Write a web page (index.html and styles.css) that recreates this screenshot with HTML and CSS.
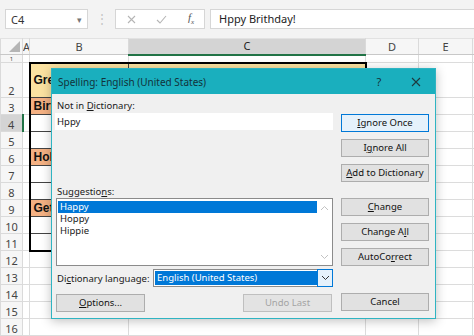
FILE: index.html
```html
<!DOCTYPE html>
<html lang="en">
<head>
  <meta charset="UTF-8">
  <title>Spelling</title>
  <link rel="stylesheet" href="styles.css">
</head>
<body>
  <div class="app">
    <div class="formula-bar">
      <div class="name-box"><span>C4</span><span class="caret">&#9662;</span></div>
      <div class="grip">&#8942;</div>
      <div class="fx-tools">
        <svg width="9" height="9" viewBox="0 0 9 9"><path d="M1 1L8 8M8 1L1 8" stroke="#b5b5b5" stroke-width="1.1" fill="none"/></svg>
        <svg width="11" height="9" viewBox="0 0 11 9"><path d="M1 5L4 8L10 1" stroke="#b5b5b5" stroke-width="1.1" fill="none"/></svg>
        <span class="fx">f<sub>x</sub></span>
      </div>
      <div class="formula-input">Hppy Brithday!</div>
    </div>

    <table class="sheet">
      <colgroup>
        <col class="w-hd"><col class="w-a"><col class="w-b"><col class="w-c"><col class="w-d"><col class="w-e"><col class="w-f">
      </colgroup>
      <tr class="col-heads">
        <th class="corner"><span class="tri"></span></th><th>A</th><th>B</th><th class="sel-col">C</th><th>D</th><th>E</th><th></th>
      </tr>
      <tr class="r-short"><th class="rh">1</th><td></td><td></td><td></td><td></td><td></td><td></td></tr>
      <tr class="r-tall"><th class="rh">2</th><td></td><td class="blk bl bt gold txt">Gre</td><td class="blk br bt gold"></td><td></td><td></td><td></td></tr>
      <tr><th class="rh">3</th><td></td><td class="blk bl orange txt">Birt</td><td class="blk br"></td><td></td><td></td><td></td></tr>
      <tr><th class="rh sel-row">4</th><td></td><td class="blk bl"></td><td class="blk br"></td><td></td><td></td><td></td></tr>
      <tr><th class="rh">5</th><td></td><td class="blk bl"></td><td class="blk br"></td><td></td><td></td><td></td></tr>
      <tr><th class="rh">6</th><td></td><td class="blk bl orange txt">Hol</td><td class="blk br"></td><td></td><td></td><td></td></tr>
      <tr><th class="rh">7</th><td></td><td class="blk bl"></td><td class="blk br"></td><td></td><td></td><td></td></tr>
      <tr><th class="rh">8</th><td></td><td class="blk bl"></td><td class="blk br"></td><td></td><td></td><td></td></tr>
      <tr><th class="rh">9</th><td></td><td class="blk bl orange txt">Get</td><td class="blk br"></td><td></td><td></td><td></td></tr>
      <tr><th class="rh">10</th><td></td><td class="blk bl"></td><td class="blk br"></td><td></td><td></td><td></td></tr>
      <tr><th class="rh">11</th><td></td><td class="blk bl bb"></td><td class="blk br bb"></td><td></td><td></td><td></td></tr>
      <tr><th class="rh">12</th><td></td><td></td><td></td><td></td><td></td><td></td></tr>
      <tr><th class="rh">13</th><td></td><td></td><td></td><td></td><td></td><td></td></tr>
      <tr><th class="rh">14</th><td></td><td></td><td></td><td></td><td></td><td></td></tr>
      <tr><th class="rh">15</th><td></td><td></td><td></td><td></td><td></td><td></td></tr>
      <tr><th class="rh">16</th><td></td><td></td><td></td><td></td><td></td><td></td></tr>
      <tr><th class="rh"></th><td></td><td></td><td></td><td></td><td></td><td></td></tr>
    </table>

    <div class="dialog">
      <div class="dialog-title">
        <span class="title-text">Spelling: English (United States)</span>
        <span class="help">?</span>
        <span class="close"><svg width="10" height="10" viewBox="0 0 10 10"><path d="M1 1L9 9M9 1L1 9" stroke="#1d3a3e" stroke-width="1.1" fill="none"/></svg></span>
      </div>
      <div class="dialog-body">
        <div class="left-col">
          <div class="label">Not in <u>D</u>ictionary:</div>
          <div class="word-box">Hppy</div>
          <div class="label sugg-label">Suggestio<u>n</u>s:</div>
          <div class="list-box">
            <div class="list-items">
              <div class="item selected">Happy</div>
              <div class="item">Hoppy</div>
              <div class="item">Hippie</div>
            </div>
            <div class="scroll">
              <svg width="9" height="6" viewBox="0 0 9 6"><path d="M1 5L4.5 1.5L8 5" stroke="#c2c2c2" fill="none"/></svg>
              <svg width="9" height="6" viewBox="0 0 9 6"><path d="M1 1L4.5 4.5L8 1" stroke="#c2c2c2" fill="none"/></svg>
            </div>
          </div>
          <div class="lang-row">
            <span class="label">Di<u>c</u>tionary language:</span>
            <div class="combo">
              <span class="combo-value">English (United States)</span>
              <span class="combo-arrow"><svg width="9" height="6" viewBox="0 0 9 6"><path d="M1 1L4.5 4.5L8 1" stroke="#333" fill="none"/></svg></span>
            </div>
          </div>
          <div class="bottom-row">
            <div class="btn"><u>O</u>ptions...</div>
            <div class="btn disabled">Undo Last</div>
          </div>
        </div>
        <div class="right-col">
          <div class="btn default first"><u>I</u>gnore Once</div>
          <div class="btn">I<u>g</u>nore All</div>
          <div class="btn"><u>A</u>dd to Dictionary</div>
          <div class="btn group"><u>C</u>hange</div>
          <div class="btn">Change A<u>l</u>l</div>
          <div class="btn">AutoCo<u>r</u>rect</div>
          <div class="btn cancel">Cancel</div>
        </div>
      </div>
    </div>
  </div>
</body>
</html>
```

FILE: styles.css
```css
* {
  margin: 0;
  padding: 0;
  box-sizing: border-box;
}
body {
  width: 474px;
  height: 336px;
  overflow: hidden;
  background: #fff;
  font-family: "Noto Sans", "Open Sans", sans-serif;
}
.app {
  position: relative;
  height: 336px;
  overflow: hidden;
}

/* formula bar */
.formula-bar {
  display: flex;
  align-items: flex-start;
  height: 38px;
  padding: 9px 0 0 5px;
  background: #f3f3f3;
}
.name-box {
  display: flex;
  align-items: center;
  justify-content: space-between;
  width: 83px;
  height: 20px;
  padding: 0 5px;
  background: #fff;
  border: 1px solid #d6d6d6;
  font-size: 11px;
  color: #333;
}
.caret {
  font-size: 9px;
  color: #777;
}
.grip {
  width: 27px;
  text-align: center;
  line-height: 20px;
  font-size: 12px;
  color: #c4c4c4;
}
.fx-tools {
  display: grid;
  grid-template-columns: 30px 30px 30px;
  align-items: center;
  justify-items: center;
  width: 90px;
  height: 20px;
  background: #fff;
  border: 1px solid #d6d6d6;
}
.fx {
  font-family: "Liberation Serif", serif;
  font-style: italic;
  font-size: 11px;
  color: #555;
}
.fx sub {
  font-size: 7px;
}
.formula-input {
  flex: 1;
  height: 20px;
  margin: 0 -6px 0 5px;
  padding-left: 8px;
  background: #fff;
  border: 1px solid #d6d6d6;
  font-size: 11px;
  line-height: 18px;
  color: #222;
}

/* sheet */
.sheet {
  border-collapse: collapse;
  table-layout: fixed;
  width: 520px;
  font-size: 11px;
}
.w-hd { width: 22px; }
.w-a { width: 7px; }
.w-b { width: 99px; }
.w-c { width: 237px; }
.w-d { width: 53px; }
.w-e { width: 54px; }
.w-f { width: 48px; }
.sheet tr {
  height: 17px;
}
.sheet tr.col-heads {
  height: 16px;
}
.sheet tr.r-short {
  height: 8px;
}
.sheet tr.r-tall {
  height: 35px;
}
.sheet th {
  background: #f6f6f6;
  border: 1px solid #dadada;
  font-weight: normal;
  color: #444;
  font-size: 11px;
  line-height: 12px;
  overflow: hidden;
}
.col-heads th {
  border-top: 1px solid #e2e2e2;
  border-bottom: 1px solid #c8c8c8;
}
.sheet th.sel-col {
  background: #d4d4d4;
  border-bottom: 2px solid #217346;
  color: #222;
}
.corner {
  position: relative;
}
.tri {
  position: absolute;
  right: 2px;
  bottom: 2px;
  width: 0;
  height: 0;
  border-left: 11px solid transparent;
  border-bottom: 11px solid #b5b5b5;
}
.rh {
  vertical-align: bottom;
  text-align: center;
  border-right: 1px solid #c8c8c8;
}
.r-short .rh {
  font-size: 6px;
  line-height: 6px;
}
.sheet th.sel-row {
  background: #d4d4d4;
  border-right: 2px solid #217346;
}
.sheet td {
  border: 1px solid #dcdcdc;
  padding: 0 3px;
  white-space: nowrap;
  overflow: hidden;
}
.sheet td.blk {
  border: 1px solid #444;
}
.sheet td.bl { border-left: 2px solid #000; }
.sheet td.br { border-right: 2px solid #000; }
.sheet td.bt { border-top: 2px solid #000; }
.sheet td.bb { border-bottom: 2px solid #000; }
.gold {
  background: #fbe2a1;
}
.orange {
  background: #f4b183;
}
.txt {
  font-family: "Liberation Sans", Arial, sans-serif;
  font-weight: bold;
  font-size: 12px;
  color: #111;
}

/* dialog */
.dialog {
  position: absolute;
  left: 51px;
  top: 68px;
  width: 385px;
  height: 251px;
  background: #f0f0f0;
  border: 1px solid #2fb4c2;
  box-shadow: 0 2px 10px rgba(0, 0, 0, .25);
  font-size: 9.5px;
  color: #1a1a1a;
}
.dialog-title {
  display: flex;
  align-items: center;
  height: 25px;
  padding-left: 6px;
  background: #1aafbe;
  color: #13323a;
  font-size: 10px;
}
.title-text {
  flex: 1;
}
.help {
  width: 24px;
  margin-right: 6px;
  text-align: center;
  font-size: 11px;
}
.close {
  display: flex;
  align-items: center;
  justify-content: center;
  width: 38px;
  height: 25px;
}
.dialog-body {
  display: grid;
  grid-template-columns: 278px 88px;
  column-gap: 8px;
  padding: 5px 6px 0 3px;
}
.left-col {
  display: flex;
  flex-direction: column;
}
.label {
  height: 13px;
  line-height: 13px;
  padding-left: 2px;
  white-space: nowrap;
}
.word-box {
  height: 17px;
  margin-top: 1px;
  padding-left: 2px;
  line-height: 17px;
  background: #fff;
}
.sugg-label {
  margin-top: 55px;
}
.list-box {
  display: flex;
  height: 68px;
  margin-left: 1px;
  background: #fff;
  border: 1px solid #8b8b8b;
}
.list-items {
  flex: 1;
  padding: 2px 0 0 1px;
}
.item {
  height: 12px;
  line-height: 12px;
  padding-left: 2px;
}
.item.selected {
  background: #0078d7;
  color: #fff;
}
.scroll {
  display: flex;
  flex-direction: column;
  justify-content: space-between;
  align-items: center;
  width: 15px;
  padding: 6px 0 5px;
}
.lang-row {
  display: flex;
  align-items: center;
  justify-content: space-between;
  height: 18px;
  margin-top: 3px;
}
.combo {
  display: flex;
  width: 180px;
  height: 18px;
  padding: 1px 0 1px 1px;
  background: #fff;
  border: 1px solid #8b8b8b;
}
.combo-value {
  flex: 1;
  padding-left: 2px;
  line-height: 14px;
  background: #0078d7;
  color: #fff;
}
.combo-arrow {
  display: flex;
  align-items: center;
  justify-content: center;
  width: 16px;
  margin: -2px -1px -2px 0;
  background: #e5f1fb;
  border: 1px solid #0078d7;
}
.bottom-row {
  display: flex;
  justify-content: space-between;
  margin-top: 7px;
  padding: 0 1px;
}
.bottom-row .btn {
  width: 89px;
}
.right-col {
  display: flex;
  flex-direction: column;
  gap: 7px;
}
.btn {
  height: 18px;
  line-height: 16px;
  text-align: center;
  white-space: nowrap;
  background: #e1e1e1;
  border: 1px solid #adadad;
  color: #111;
}
.btn.default {
  background: #e5f1fb;
  border-color: #0078d7;
}
.btn.disabled {
  color: #a3a3a3;
  border-color: #bfbfbf;
  background: #e3e3e3;
}
.btn.first {
  margin-top: 15px;
}
.btn.group {
  margin-top: 9px;
}
.btn.cancel {
  margin-top: 20px;
}
```
